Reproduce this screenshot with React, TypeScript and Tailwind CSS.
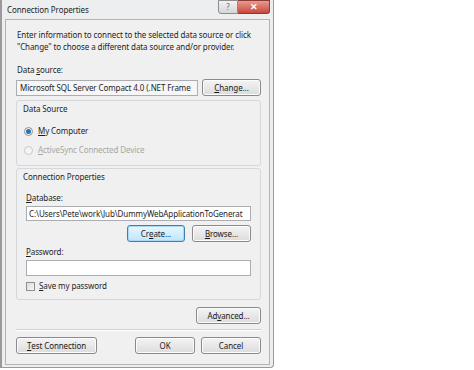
import React from "react"

const font = { fontFamily: '"Noto Sans", "Open Sans", sans-serif' }

function Btn({ children, w, focused = false }: { children: React.ReactNode; w: string; focused?: boolean }) {
  return (
    <div
      className={`${w} h-[17px] flex items-center justify-center rounded-[3px] border text-[8px] tracking-[-0.1px] text-[#1a1a1a] ${
        focused
          ? "border-[#3c7fb1] bg-gradient-to-b from-[#eaf6fd] to-[#bee6fd] shadow-[inset_0_0_0_1px_#a8d8f5]"
          : "border-[#8a8a8a] bg-gradient-to-b from-[#f4f4f4] to-[#dcdcdc] shadow-[inset_0_0_0_1px_#fbfbfb]"
      }`}
    >
      {children}
    </div>
  )
}

function U({ children }: { children: React.ReactNode }) {
  return <span className="underline underline-offset-1">{children}</span>
}

export default function App() {
  return (
    <div className="w-[474px] h-[370px] bg-white overflow-hidden" style={font}>
      {/* Window frame */}
      <div className="w-[274px] h-[368px] bg-[#eceeef] border-l-2 border-r border-b border-[#9a9a9a] rounded-br-[4px] flex flex-col">
        {/* Title bar */}
        <div className="h-[19px] flex items-start relative">
          <span className="text-[8px] tracking-[-0.1px] text-[#1e1e1e] pl-[5px] pt-[4px] leading-[12px]">Connection Properties</span>
          <div className="absolute right-[3px] top-0 flex">
            <div className="w-[20px] h-[14px] border border-[#8c8c8c] rounded-bl-[3px] bg-gradient-to-b from-[#f2f2f2] to-[#d6d6d6] flex items-center justify-center text-[8px] text-[#6a6a6a]">
              ?
            </div>
            <div className="w-[32px] h-[14px] border border-l-0 border-[#8e3a35] rounded-br-[3px] bg-gradient-to-b from-[#e49b92] to-[#c7473b] flex items-center justify-center text-[9px] font-bold text-white">
              ✕
            </div>
          </div>
        </div>

        {/* Client area */}
        <div className="ml-[3px] w-[265px] h-[346px] bg-[#f0f0f0] border border-[#b4b4b4] pl-[10px] pr-[8px] pt-[9px] text-[8px] tracking-[-0.1px] leading-[12px] text-[#1e1e1e]">
          <p className="pl-[1px] whitespace-nowrap">
            Enter information to connect to the selected data source or click
            <br />
            "Change" to choose a different data source and/or provider.
          </p>

          <div className="mt-[11px] pl-[1px]">
            Data <U>s</U>ource:
          </div>
          <div className="mt-[3px] flex items-center gap-[4px]">
            <div className="w-[182px] h-[16px] border border-[#abadb3] bg-[#f6f6f6] px-[3px] flex items-center overflow-hidden whitespace-nowrap">
              <span>Microsoft SQL Server Compact 4.0 (.NET Frame</span>
            </div>
            <Btn w="w-[59px]">
              <U>C</U>hange...
            </Btn>
          </div>

          {/* Data Source group */}
          <div className="mt-[4px] w-[245px] h-[66px] border border-[#d5d8da] rounded-[3px] pl-[6px] pt-[2px]">
            <div>Data Source</div>
            <div className="mt-[10px] pl-[1px] flex items-center gap-[5px]">
              <div className="w-[9px] h-[9px] rounded-full border border-[#8f8f8f] bg-[#f6f6f6] flex items-center justify-center">
                <div className="w-[5px] h-[5px] rounded-full bg-[#2d6fb4]" />
              </div>
              <span>
                <U>M</U>y Computer
              </span>
            </div>
            <div className="mt-[7px] pl-[1px] flex items-center gap-[5px] text-[#a6a6a6]">
              <div className="w-[9px] h-[9px] rounded-full border border-[#c8c8c8] bg-[#f4f4f4]" />
              <span>
                <U>A</U>ctiveSync Connected Device
              </span>
            </div>
          </div>

          {/* Connection Properties group */}
          <div className="mt-[2px] w-[245px] h-[132px] border border-[#d5d8da] rounded-[3px] pl-[6px] pr-[9px] pt-[2px]">
            <div>Connection Properties</div>
            <div className="mt-[9px] pl-[3px]">
              <U>D</U>atabase:
            </div>
            <div className="mt-[2px] ml-[3px] h-[15px] border border-[#abadb3] bg-white px-[2px] flex items-center overflow-hidden whitespace-nowrap">
              <span>C:\Users\Pete\work\Jub\DummyWebApplicationToGenerat</span>
            </div>
            <div className="mt-[4px] flex justify-end gap-[7px]">
              <Btn w="w-[58px]" focused>
                Cr<U>e</U>ate...
              </Btn>
              <Btn w="w-[59px]">
                <U>B</U>rowse...
              </Btn>
            </div>
            <div className="mt-[4px] pl-[3px]">
              <U>P</U>assword:
            </div>
            <div className="mt-[2px] ml-[3px] h-[16px] border border-[#abadb3] bg-white" />
            <div className="mt-[4px] pl-[3px] flex items-center gap-[4px]">
              <div className="w-[9px] h-[9px] border border-[#8f8f8f] bg-gradient-to-br from-[#dcdcdc] to-[#f8f8f8]" />
              <span>
                <U>S</U>ave my password
              </span>
            </div>
          </div>

          <div className="mt-[7px] flex justify-end w-[245px]">
            <Btn w="w-[65px]">
              Ad<U>v</U>anced...
            </Btn>
          </div>

          <div className="mt-[5px] w-[245px] border-t border-[#d0d0d0] border-b border-b-white" />

          <div className="mt-[6px] w-[245px] flex">
            <Btn w="w-[81px]">
              <U>T</U>est Connection
            </Btn>
            <div className="flex-1" />
            <div className="flex gap-[6px]">
              <Btn w="w-[60px]">OK</Btn>
              <Btn w="w-[60px]">Cancel</Btn>
            </div>
          </div>
        </div>
      </div>
    </div>
  )
}
